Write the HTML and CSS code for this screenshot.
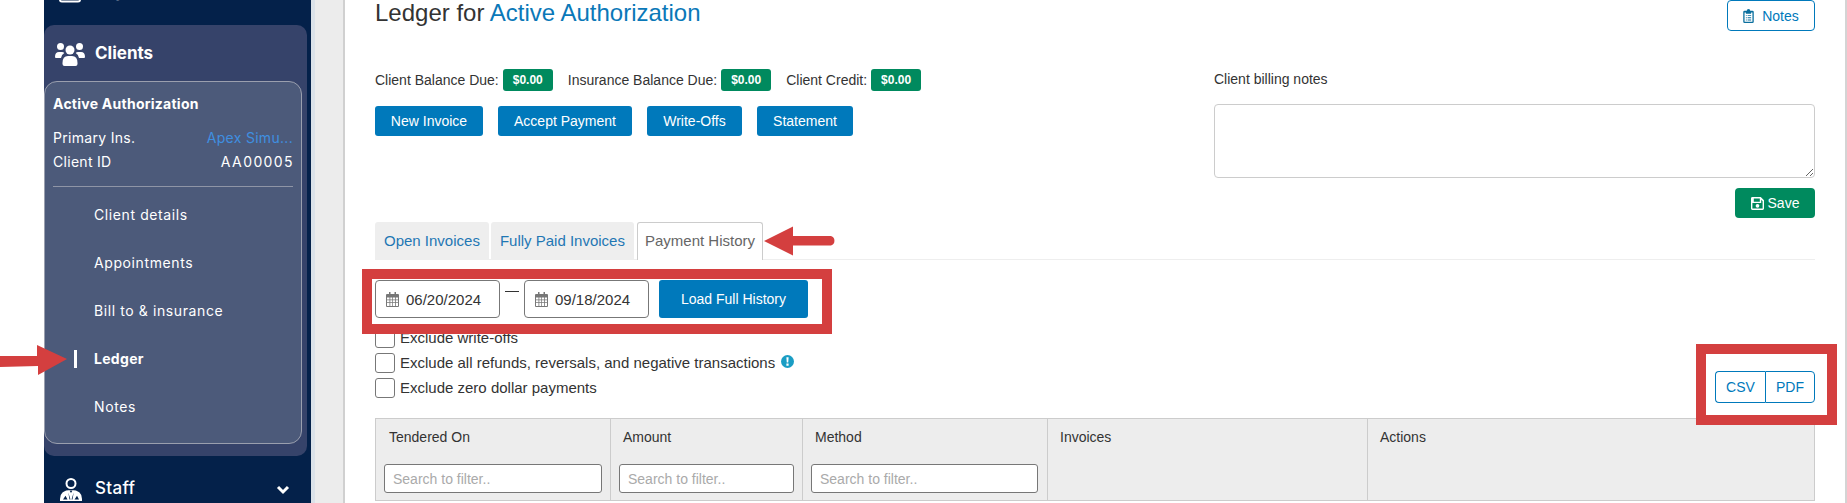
FILE: index.html
```html
<!DOCTYPE html>
<html lang="en">
<head>
<meta charset="utf-8">
<title>Ledger</title>
<link rel="stylesheet" href="styles.css">
</head>
<body>
<div class="page">
  <div class="gutter"></div>
  <aside class="sidebar">
    <div class="nav-top">
      <svg class="nav-top-icon" viewBox="0 0 22 6"><path d="M1 0v2.500q0 2 2 2h16q2 0 2-2V0" fill="none" stroke="#fff" stroke-width="2"/></svg>
      <span>Payers</span>
    </div>
    <section class="panel">
      <header class="panel-head">
        <svg class="clients-icon" viewBox="0 0 30 24"><g fill="#fff"><circle cx="5.500" cy="4.500" r="3.500"/><circle cx="24.500" cy="4.500" r="3.500"/><circle cx="15" cy="8" r="4.500"/><path d="M0 15q0-5 4-5h3q1.500 0 2.300 1-3 1.800-3.300 5H1q-1 0-1-1zM30 15q0-5-4-5h-3q-1.500 0-2.300 1 3 1.800 3.300 5h5q1 0 1-1zM7.500 21q0-7 5.500-7h4q5.500 0 5.500 7v1q0 2-2 2h-11q-2 0-2-2z"/></g></svg>
        <span>Clients</span>
      </header>
      <div class="client-card">
        <div class="client-name">Active Authorization</div>
        <div class="kv"><span>Primary Ins.</span><a class="kv-link">Apex Simu...</a></div>
        <div class="kv"><span>Client ID</span><span class="kv-id">AA00005</span></div>
        <hr class="client-rule">
        <ul class="subnav">
          <li>Client details</li>
          <li>Appointments</li>
          <li>Bill to &amp; insurance</li>
          <li class="active">Ledger</li>
          <li>Notes</li>
        </ul>
      </div>
    </section>
    <div class="nav-row">
      <svg class="staff-icon" viewBox="0 0 22 24"><circle cx="11" cy="5.500" r="4.500" fill="none" stroke="#fff" stroke-width="2"/><path fill="#fff" d="M0 23v-2q0-9 11-9t11 9v2z"/><path fill="#04214a" d="M3 21.500h4.500l-2-3.800zM14.500 21.500H19l-2-3.800zM9.500 12.500h3L11 15zM8.300 14.500l2.200 7h-1zM13.700 14.500l-2.200 7h1z"/></svg>
      <span class="nav-label">Staff</span>
      <svg class="chevron" viewBox="0 0 14 10"><path d="M2 2l5 5 5-5" fill="none" stroke="#fff" stroke-width="3"/></svg>
    </div>
  </aside>
  <div class="sidebar-edge"></div>
  <div class="backdrop"></div>
  <main class="main">
    <div class="title-row">
      <h1 class="title">Ledger for <a class="title-link">Active Authorization</a></h1>
      <button class="btn-outline notes-btn">
        <svg class="notes-icon" viewBox="0 0 12 16"><path fill="#0a6f9e" d="M1.500 2H4a2 2 0 0 1 4 0h2.500A1.500 1.500 0 0 1 12 3.500v11a1.500 1.500 0 0 1-1.500 1.500h-9A1.500 1.500 0 0 1 0 14.500v-11A1.500 1.500 0 0 1 1.500 2z"/><path fill="#fff" d="M1.500 4h1.500v1.500h6V4h1.500v10.500h-9z"/><path fill="#0a6f9e" d="M3 7h1v1H3zM5 7h4v1H5zM3 9.500h1v1H3zM5 9.500h4v1H5zM3 12h1v1H3zM5 12h4v1H5z"/></svg>
        Notes
      </button>
    </div>
    <div class="billing">
      <div class="billing-left">
        <div class="balances">
          <span class="bal-label">Client Balance Due:</span><span class="badge">$0.00</span>
          <span class="bal-label">Insurance Balance Due:</span><span class="badge">$0.00</span>
          <span class="bal-label">Client Credit:</span><span class="badge">$0.00</span>
        </div>
        <div class="actions">
          <button class="btn new">New Invoice</button>
          <button class="btn accept">Accept Payment</button>
          <button class="btn writeoff">Write-Offs</button>
          <button class="btn statement">Statement</button>
        </div>
      </div>
      <div class="billing-right">
        <label class="notes-label">Client billing notes</label>
        <textarea class="notes-area"></textarea>
        <div class="save-row">
          <button class="btn-save">
            <svg class="save-icon" viewBox="0 0 14 14"><path fill="#fff" fill-rule="evenodd" d="M1.500 0h9L14 3.500v9a1.500 1.500 0 0 1-1.500 1.500h-11A1.500 1.500 0 0 1 0 12.500v-11A1.500 1.500 0 0 1 1.500 0zM3 1.500V5h6.500V1.500zM1.500 1.500v11h11V4.500L11 3v3.500H1.500z"/><circle cx="7" cy="9.500" r="2" fill="#fff"/></svg>
            Save
          </button>
        </div>
      </div>
    </div>
    <nav class="tabs">
      <a class="tab">Open Invoices</a>
      <a class="tab">Fully Paid Invoices</a>
      <a class="tab current">Payment History</a>
    </nav>
    <div class="dates">
      <div class="date-input"><svg class="cal" viewBox="0 0 13 15"><path fill="#777" d="M3 0h1.500v2h4V0H10v2h2a1 1 0 0 1 1 1v11a1 1 0 0 1-1 1H1a1 1 0 0 1-1-1V3a1 1 0 0 1 1-1h2z"/><path fill="#fff" d="M1 5.500h2.500v2H1zM4.300 5.500h2v2h-2zM7 5.500h2v2H7zM9.800 5.500H12v2H9.800zM1 8.300h2.500v2H1zM4.300 8.300h2v2h-2zM7 8.300h2v2H7zM9.800 8.300H12v2H9.800zM1 11.100h2.500V14H1zM4.300 11.100h2V14h-2zM7 11.100h2V14H7zM9.800 11.100H12V14H9.800z"/></svg>06/20/2024</div>
      <span class="dash"></span>
      <div class="date-input"><svg class="cal" viewBox="0 0 13 15"><path fill="#777" d="M3 0h1.500v2h4V0H10v2h2a1 1 0 0 1 1 1v11a1 1 0 0 1-1 1H1a1 1 0 0 1-1-1V3a1 1 0 0 1 1-1h2z"/><path fill="#fff" d="M1 5.500h2.500v2H1zM4.300 5.500h2v2h-2zM7 5.500h2v2H7zM9.800 5.500H12v2H9.800zM1 8.300h2.500v2H1zM4.300 8.300h2v2h-2zM7 8.300h2v2H7zM9.800 8.300H12v2H9.800zM1 11.100h2.500V14H1zM4.300 11.100h2V14h-2zM7 11.100h2V14H7zM9.800 11.100H12V14H9.800z"/></svg>09/18/2024</div>
      <button class="btn load">Load Full History</button>
    </div>
    <div class="filters">
      <div class="checks">
        <label class="check"><span class="box"></span>Exclude write-offs</label>
        <label class="check"><span class="box"></span>Exclude all refunds, reversals, and negative transactions
          <svg class="info" viewBox="0 0 14 14"><circle cx="7" cy="7" r="7" fill="#1a9dc4"/><path fill="#fff" d="M5.800 2.500h2.400l-.4 5.500H6.200zM5.800 9.200h2.400v2.300H5.800z"/></svg>
        </label>
        <label class="check"><span class="box"></span>Exclude zero dollar payments</label>
      </div>
      <div class="exports">
        <button class="exp">CSV</button><button class="exp">PDF</button>
      </div>
    </div>
    <table class="grid">
      <thead>
        <tr>
          <th class="c1">Tendered On<input class="filter filter1" placeholder="Search to filter.."></th>
          <th class="c2">Amount<input class="filter filter2" placeholder="Search to filter.."></th>
          <th class="c3">Method<input class="filter filter3" placeholder="Search to filter.."></th>
          <th class="c4">Invoices</th>
          <th class="c5">Actions</th>
        </tr>
      </thead>
    </table>
    <div class="frame frame-dates"></div>
    <div class="frame frame-export"></div>
    <svg class="arrow arrow-tab" viewBox="0 0 72 30"><path fill="#d43f3f" d="M0 15 29 .5V10h38a5 5 0 0 1 0 9.500H29V29.500z"/></svg>
  </main>
  <svg class="arrow arrow-nav" viewBox="0 0 67 30"><path fill="#d43f3f" d="M0 11h37V0l30 14-29 16V21L0 22z"/></svg>
</div>
</body>
</html>
```

FILE: styles.css
```css
* { box-sizing: border-box; }
html, body { margin: 0; height: 503px; overflow: hidden; background: #fff; }
body { font-family: "Liberation Sans", Arial, sans-serif; font-size: 14px; color: #333; }
.page { position: relative; display: flex; width: 1847px; height: 503px; overflow: hidden; }
.gutter { flex: 0 0 44px; }

.sidebar { flex: 0 0 267px; background: #04214a; color: #fff; font-family: Inter, "Liberation Sans", sans-serif; display: flex; flex-direction: column; align-items: stretch; }
.nav-top { display: flex; align-items: flex-start; gap: 14px; height: 25px; padding-left: 15px; }
.nav-top span { display: block; margin-top: -14px; font-size: 17px; line-height: 10px; }
.nav-top-icon { width: 22px; height: 6px; margin-top: -3px; }
.panel { width: 263px; height: 431px; background: #36436a; border-radius: 10px; }
.panel-head { display: flex; align-items: flex-start; gap: 10px; height: 56px; padding: 17px 0 0 11px; font-size: 17px; font-weight: 700; line-height: 23px; }
.clients-icon { width: 30px; height: 24px; }
.client-card { width: 258px; height: 363px; padding: 0 8px; background: #4c5a7a; border: 1px solid #9a9fae; border-radius: 13px; font-size: 14px; letter-spacing: .3px; }
.client-name { margin-top: 12px; font-weight: 700; line-height: 20px; letter-spacing: .25px; }
.kv { display: flex; justify-content: space-between; line-height: 24px; }
.kv:nth-child(2) { margin-top: 12px; }
.kv-link { color: #3f8fe0; }
.kv-id { letter-spacing: 1.4px; margin-right: -1px; }
.client-rule { margin: 12px 0 0; border: 0; border-top: 1px solid #8f95a6; }
.subnav { list-style: none; margin: 4px 0 0; padding: 0; letter-spacing: .6px; }
.subnav li { position: relative; height: 48px; line-height: 48px; padding-left: 41px; }
.subnav li.active { font-weight: 700; letter-spacing: .3px; }
.subnav li.active::before { content: ""; position: absolute; left: 21px; top: 15px; width: 3px; height: 18px; background: #fff; }
.nav-row { display: flex; flex: 1; align-items: flex-start; padding: 0 21px 0 16px; }
.staff-icon { width: 22px; height: 24px; margin-top: 22px; }
.nav-label { margin: 22px 0 0 13px; font-size: 17px; font-weight: 500; line-height: 21px; letter-spacing: .3px; }
.chevron { width: 14px; height: 10px; margin: 29px 0 0 auto; }

.sidebar-edge { flex: 0 0 4px; background: #dbe2e9; }
.backdrop { flex: 0 0 30px; background: linear-gradient(to right, #ececec 28px, #d0d0d0 28px); }

.main { position: relative; flex: 0 0 1502px; padding: 0 32px 0 30px; background: #fff; }
.main::after { content: ""; position: absolute; right: 0; top: 0; bottom: 0; width: 2px; background: #d4d4d4; }
.title-row { display: flex; justify-content: space-between; align-items: flex-start; height: 69px; }
.title { margin: 0; font-size: 24px; font-weight: 400; line-height: 25px; }
.title-link { color: #0a78b8; }
.btn-outline { display: flex; align-items: center; justify-content: center; gap: 8px; width: 88px; height: 31px; margin: 0; padding: 0; border: 1px solid #0079bb; border-radius: 4px; background: #fff; color: #0079bb; font: 14px "Liberation Sans", Arial, sans-serif; }
.notes-icon { width: 11px; height: 14px; }

.billing { display: flex; justify-content: space-between; height: 153px; }
.billing-left { width: 600px; }
.balances { display: flex; align-items: center; height: 22px; }
.bal-label { margin-right: 4px; }
.badge { width: 50px; height: 22px; margin-right: 15px; border-radius: 3px; background: #008a5e; color: #fff; font-size: 12px; font-weight: 700; line-height: 22px; text-align: center; }
.actions { display: flex; gap: 15px; margin-top: 15px; }
.btn { height: 30px; padding: 0; border: 0; border-radius: 3px; background: #0079bb; color: #fff; font: 14px "Liberation Sans", Arial, sans-serif; }
.new { width: 108px; }
.accept { width: 134px; }
.writeoff { width: 95px; }
.statement { width: 96px; }
.billing-right { width: 601px; }
.notes-label { display: block; line-height: 20px; }
.notes-area { display: block; width: 100%; height: 74px; margin-top: 15px; border: 1px solid #ccc; border-radius: 4px; background: #fff; }
.save-row { display: flex; justify-content: flex-end; margin-top: 10px; }
.btn-save { display: flex; align-items: center; justify-content: center; gap: 4px; width: 80px; height: 30px; padding: 0; border: 0; border-radius: 4px; background: #008a5e; color: #fff; font: 14px "Liberation Sans", Arial, sans-serif; }
.save-icon { width: 13px; height: 13px; }

.tabs { display: flex; gap: 2px; height: 38px; border-bottom: 1px solid #eee; }
.tab { display: block; height: 38px; padding: 0 9px; background: #eee; border-radius: 3px 3px 0 0; color: #1f77b4; font-size: 15px; line-height: 38px; }
.tab.current { margin-left: 1px; padding: 0 7px; background: #fff; border: 1px solid #ccc; border-bottom: 0; color: #666; line-height: 36px; }

.dates { display: flex; align-items: flex-start; height: 48px; margin-top: 20px; }
.date-input { display: flex; align-items: center; width: 125px; height: 38px; padding-left: 10px; border: 1px solid #777; border-radius: 4px; font-size: 15px; color: #333; }
.cal { width: 13px; height: 15px; margin-right: 7px; }
.dash { width: 14px; height: 1px; margin: 11px 5px 0; background: #333; }
.load { width: 149px; height: 38px; margin-left: 10px; font-size: 14px; }

.filters { display: flex; justify-content: space-between; height: 90px; }
.check { display: flex; align-items: center; height: 20px; margin-bottom: 5px; padding-bottom: 2px; color: #333; font-size: 15px; white-space: nowrap; }
.box { align-self: flex-start; flex: 0 0 20px; height: 20px; margin-right: 5px; border: 1px solid #777; border-radius: 3px; background: #fff; }
.info { width: 13px; height: 13px; margin: -1px 0 0 6px; }
.exports { display: flex; margin-top: 43px; height: 32px; }
.exp { width: 50px; height: 32px; padding: 0; border: 1px solid #0079bb; background: #fff; color: #0079bb; font: 14px "Liberation Sans", Arial, sans-serif; }
.exp:first-child { border-right: 0; border-radius: 4px 0 0 4px; }
.exp:last-child { border-radius: 0 4px 4px 0; }

.grid { width: 1440px; table-layout: fixed; border-collapse: collapse; }
.grid th { height: 82px; padding: 8px 0 0 12px; vertical-align: top; background: #ededed; border: 1px solid #ccc; font-weight: 400; text-align: left; line-height: 20px; }
.grid .c1 { width: 235px; padding-left: 13px; }
.c2 { width: 192px; }
.c3 { width: 245px; }
.c4 { width: 320px; }
.filter { display: block; height: 29px; margin-top: 17px; padding: 0 8px; border: 1px solid #777; border-radius: 3px; background: #fff; font: 14px "Liberation Sans", Arial, sans-serif; }
.filter::placeholder { color: #aaa; }
.filter1 { width: 218px; margin-left: -5px; }
.filter2 { width: 175px; margin-left: -4px; }
.filter3 { width: 227px; margin-left: -4px; }

.frame { position: absolute; border: 10px solid #d43f3f; }
.frame-dates { left: 17px; top: 269px; width: 470px; height: 65px; }
.frame-export { left: 1351px; top: 344px; width: 141px; height: 81px; }
.arrow { position: absolute; }
.arrow-tab { left: 419px; top: 226px; width: 72px; height: 30px; }
.arrow-nav { left: 0; top: 345px; width: 67px; height: 30px; }
```
